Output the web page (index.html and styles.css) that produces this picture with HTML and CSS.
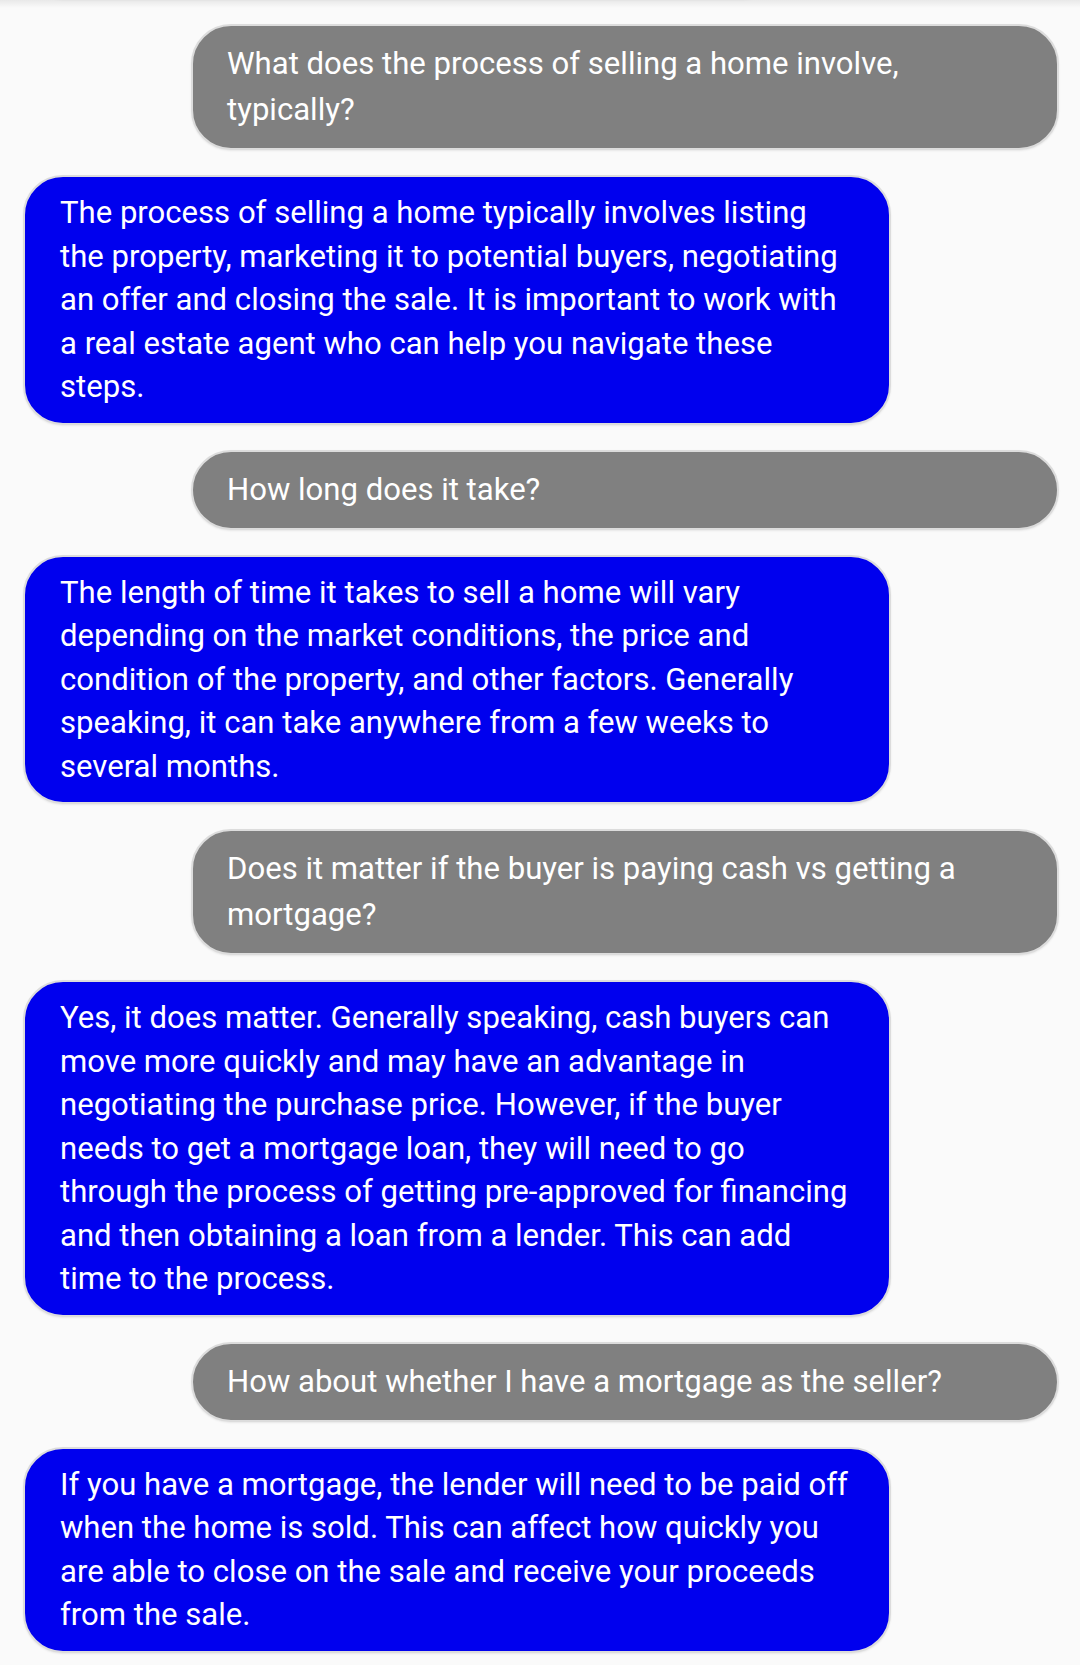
FILE: index.html
```html
<!DOCTYPE html>
<html>
<head>
<meta charset="utf-8">
<link rel="stylesheet" href="styles.css">
</head>
<body>
<div class="topshade"></div>
<div class="chat">
  <div class="msg bot prev"></div>
  <div class="msg user">What does the process of selling a home involve, typically?</div>
  <div class="msg bot">The process of selling a home typically involves listing the property, marketing it to potential buyers, negotiating an offer and closing the sale. It is important to work with a real estate agent who can help you navigate these steps.</div>
  <div class="msg user">How long does it take?</div>
  <div class="msg bot">The length of time it takes to sell a home will vary depending on the market conditions, the price and condition of the property, and other factors. Generally speaking, it can take anywhere from a few weeks to several months.</div>
  <div class="msg user">Does it matter if the buyer is paying cash vs getting a mortgage?</div>
  <div class="msg bot">Yes, it does matter. Generally speaking, cash buyers can move more quickly and may have an advantage in negotiating the purchase price. However, if the buyer needs to get a mortgage loan, they will need to go through the process of getting pre-approved for financing and then obtaining a loan from a lender. This can add time to the process.</div>
  <div class="msg user">How about whether I have a mortgage as the seller?</div>
  <div class="msg bot">If you have a mortgage, the lender will need to be paid off when the home is sold. This can affect how quickly you are able to close on the sale and receive your proceeds from the sale.</div>
</div>
</body>
</html>
```
FILE: styles.css
```css
html, body {
  margin: 0;
  padding: 0;
  background: #fafafa;
  overflow: hidden;
  height: 1665px;
}
body {
  font-family: Roboto, "Noto Sans", sans-serif;
  position: relative;
}
.topshade {
  position: absolute;
  left: 0;
  top: 0;
  right: 0;
  height: 8px;
  background: linear-gradient(to bottom, rgba(0,0,0,0.07), rgba(0,0,0,0));
  z-index: 2;
}
.chat {
  display: flex;
  flex-direction: column;
  gap: 25px;
  padding: 0 21px 0 23px;
  margin-top: -81px;
}
.msg {
  box-sizing: border-box;
  width: 868px;
  border: 2px solid #dcdcdc;
  border-radius: 40px;
  padding: 14px 34px 14px 35px;
  color: #fff;
  font-size: 31.1px;
  line-height: 43.5px;
  box-shadow: 0 1px 2px rgba(0,0,0,0.08);
}
.user {
  align-self: flex-end;
  background: #808080;
  font-size: 31.1px;
  line-height: 46px;
  padding: 15px 34px;
}
.bot {
  align-self: flex-start;
  background: #0000ee;
}
.prev {
  width: 760px;
  height: 80px;
}
```
